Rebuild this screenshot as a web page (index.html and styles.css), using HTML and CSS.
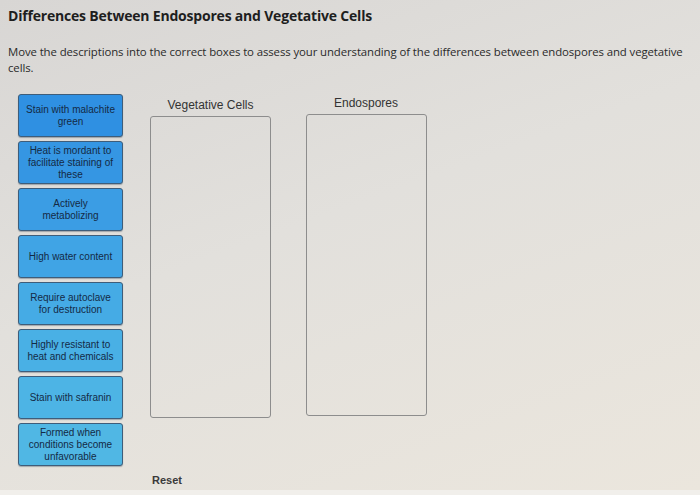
FILE: index.html
```html
<!DOCTYPE html>
<html lang="en">
<head>
  <meta charset="UTF-8">
  <meta name="viewport" content="width=device-width, initial-scale=1.0">
  <title>Differences Between Endospores and Vegetative Cells</title>
  <link rel="stylesheet" href="styles.css">
</head>
<body>
  <div class="page">
    <h1>Differences Between Endospores and Vegetative Cells</h1>
    <p class="intro">Move the descriptions into the correct boxes to assess your understanding of the differences between endospores and vegetative cells.</p>

    <div class="board">
      <div class="cards">
        <div class="card c1">Stain with malachite green</div>
        <div class="card c2">Heat is mordant to facilitate staining of these</div>
        <div class="card c3">Actively<br>metabolizing</div>
        <div class="card c4">High water content</div>
        <div class="card c5">Require autoclave for destruction</div>
        <div class="card c6">Highly resistant to heat and chemicals</div>
        <div class="card c7">Stain with safranin</div>
        <div class="card c8">Formed when conditions become unfavorable</div>
      </div>

      <div class="target">
        <div class="target-title">Vegetative Cells</div>
        <div class="dropbox"></div>
      </div>

      <div class="target second">
        <div class="target-title">Endospores</div>
        <div class="dropbox"></div>
      </div>

      <button class="reset">Reset</button>
    </div>
  </div>
</body>
</html>
```

FILE: styles.css
```css
html{
  background: #f1efeb;
}
body{
  margin: 0;
}
.page{
  height: 474px;
  padding: 8px;
  background: linear-gradient(160deg, #d8d6d4 0%, #e2e0dc 45%, #ebe6dd 100%);
  color: #222;
  font-family: "Open Sans", sans-serif;
}
h1{
  margin: 0;
  font-size: 14px;
  line-height: 16px;
  font-weight: 700;
  letter-spacing: -0.2px;
  color: #1e1e1e;
}
.intro{
  margin: 20px 0 0;
  width: 684px;
  font-size: 11.4px;
  line-height: 16px;
  letter-spacing: -0.1px;
  color: #2a2a2a;
}
.board{
  display: grid;
  grid-template-columns: 105px 121px 129px;
  column-gap: 27px;
  row-gap: 7px;
  margin: 18px 0 0 10px;
  font-family: "Liberation Sans", Arial, sans-serif;
}
.cards{
  display: flex;
  flex-direction: column;
  gap: 4px;
}
.card{
  height: 43px;
  box-sizing: border-box;
  display: flex;
  align-items: center;
  justify-content: center;
  padding: 0 4px;
  text-align: center;
  font-size: 10px;
  line-height: 12px;
  color: #142a45;
  border: 1px solid #3e5d7a;
  border-radius: 3px;
  box-shadow: 0 1px 1px rgba(40, 60, 80, 0.35);
}
.c1{ background: #2f90e2; }
.c2{ background: #3596e3; }
.c3{ background: #3b9de4; }
.c4{ background: #40a4e5; }
.c5{ background: #45abe5; }
.c6{ background: #49b0e5; }
.c7{ background: #4db4e5; }
.c8{ background: #50b7e4; }
.target{
  display: flex;
  flex-direction: column;
  align-items: center;
  padding-top: 4px;
}
.target.second{
  padding-left: 7px;
  padding-top: 2px;
}
.target-title{
  font-size: 12px;
  line-height: 14px;
  color: #333;
  margin-bottom: 4px;
}
.dropbox{
  width: 121px;
  height: 302px;
  box-sizing: border-box;
  border: 1px solid #8d8d8d;
  border-radius: 3px;
}
.reset{
  grid-column: 2;
  justify-self: start;
  margin-left: 2px;
  padding: 0;
  border: none;
  background: none;
  font-family: "Liberation Sans", Arial, sans-serif;
  font-size: 11px;
  font-weight: 700;
  line-height: 14px;
  color: #3a3a3a;
}
```
